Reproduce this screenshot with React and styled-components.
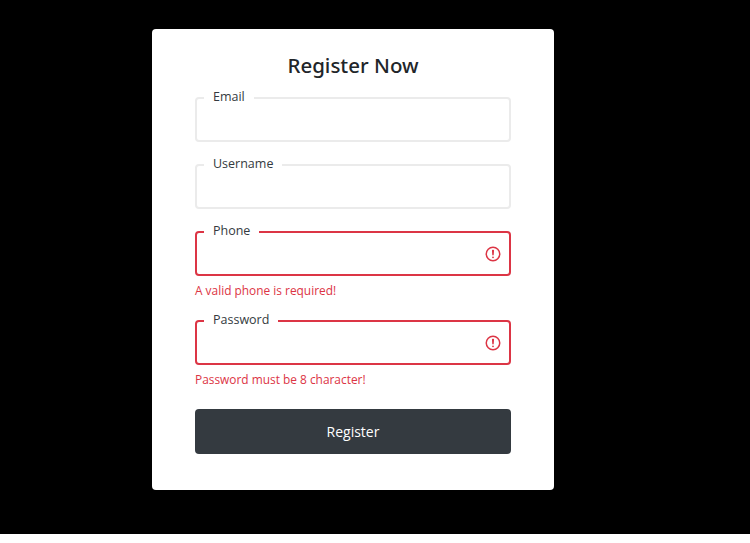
import styled, { createGlobalStyle } from "styled-components"

const GlobalStyle = createGlobalStyle`
  body {
    margin: 0;
    background: #fff;
    font-family: "Open Sans", "Noto Sans", sans-serif;
    color: #212529;
  }
`;

const fields = [
  { label: "Email" },
  { label: "Username" },
  { label: "Phone", error: "A valid phone is required!" },
  { label: "Password", error: "Password must be 8 character!" },
];

function InvalidIcon() {
  return (
    <Icon viewBox="0 0 12 12" fill="none" stroke="#dc3545">
      <circle cx="6" cy="6" r="4.5" />
      <path strokeLinejoin="round" d="M5.8 3.6h.4L6 6.5z" fill="#dc3545" />
      <circle cx="6" cy="8.2" r=".6" fill="#dc3545" stroke="none" />
    </Icon>
  );
}

function App() {
  return (
    <Page>
      <GlobalStyle />
      <Card>
        <Title>Register Now</Title>
        <Form onSubmit={(e) => e.preventDefault()}>
          {fields.map((field) => (
            <Field key={field.label}>
              <Box $invalid={!!field.error}>
                <Legend>{field.label}</Legend>
                <Input aria-label={field.label} />
                {field.error && <InvalidIcon />}
              </Box>
              {field.error && <ErrorText>{field.error}</ErrorText>}
            </Field>
          ))}
          <SubmitButton>Register</SubmitButton>
        </Form>
      </Card>
    </Page>
  );
}
export default App

const Page = styled.div`
  height: 534px;
  background: #000;
  padding-top: 29px;
  box-sizing: border-box;
`;

const Card = styled.div`
  width: 402px;
  height: 461px;
  margin-left: 152px;
  padding: 21px 43px 0;
  box-sizing: border-box;
  background: #fff;
  border-radius: 4px;
`;

const Title = styled.h1`
  margin: 0;
  height: 31px;
  font-family: "Noto Sans", sans-serif;
  font-size: 20.5px;
  line-height: 31px;
  font-weight: 500;
  text-align: center;
`;

const Form = styled.form`
  display: flex;
  flex-direction: column;
  margin-top: 7px;
`;

const Field = styled.div`
  margin-bottom: 13px;
`;

const Box = styled.fieldset`
  position: relative;
  display: block;
  height: 54px;
  margin: 0;
  padding: 0;
  box-sizing: border-box;
  border: 2px solid ${(props) => (props.$invalid ? "#dc3545" : "#ebebeb")};
  border-radius: 4px;
`;

const Legend = styled.legend`
  margin-left: 7px;
  padding: 0 9px;
  height: 20px;
  font-size: 12.5px;
  line-height: 18px;
  color: #343a40;
`;

const Input = styled.input`
  display: block;
  width: 100%;
  height: 32px;
  padding: 0 34px 0 16px;
  box-sizing: border-box;
  border: 0;
  outline: 0;
  background: transparent;
`;

const Icon = styled.svg`
  position: absolute;
  right: 7px;
  bottom: 11px;
  width: 18px;
  height: 18px;
`;

const ErrorText = styled.div`
  margin-top: 6px;
  font-size: 11.9px;
  line-height: 16px;
  color: #dc3545;
`;

const SubmitButton = styled.button`
  height: 45px;
  margin-top: 9px;
  border: 0;
  border-radius: 4px;
  background: #343a40;
  color: #fff;
  font-family: inherit;
  font-size: 14px;
`;
